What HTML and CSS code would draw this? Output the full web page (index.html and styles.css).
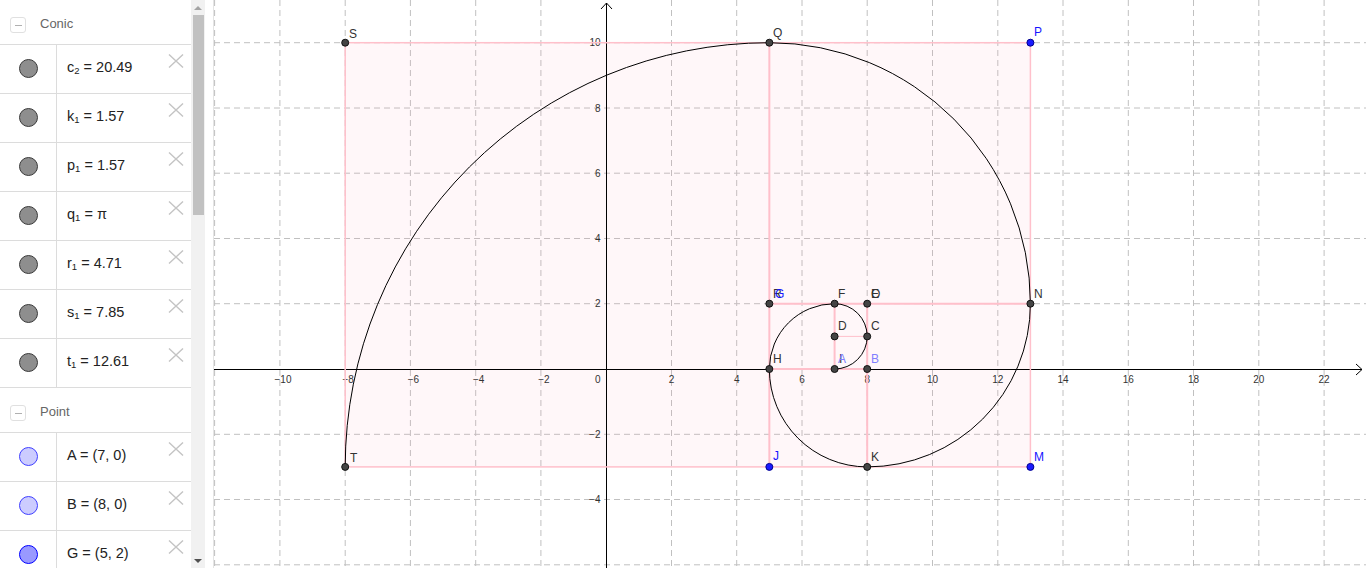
FILE: index.html
```html
<!DOCTYPE html>
<html>
<head>
<meta charset="utf-8">
<link rel="stylesheet" href="styles.css">
</head>
<body>
<div class="algebra">
  <div class="list">
    <div class="header"><span class="toggle"><span class="minus"></span></span><span class="htitle">Conic</span></div>
    <div class="row"><div class="icon-cell"><span class="dot gray"></span></div><div class="expr"><span>c<sub>2</sub> = 20.49</span></div><svg class="close" viewBox="0 0 16 14"><path d="M1 0.5L15 13.5M15 0.5L1 13.5"/></svg></div>
    <div class="row"><div class="icon-cell"><span class="dot gray"></span></div><div class="expr"><span>k<sub>1</sub> = 1.57</span></div><svg class="close" viewBox="0 0 16 14"><path d="M1 0.5L15 13.5M15 0.5L1 13.5"/></svg></div>
    <div class="row"><div class="icon-cell"><span class="dot gray"></span></div><div class="expr"><span>p<sub>1</sub> = 1.57</span></div><svg class="close" viewBox="0 0 16 14"><path d="M1 0.5L15 13.5M15 0.5L1 13.5"/></svg></div>
    <div class="row"><div class="icon-cell"><span class="dot gray"></span></div><div class="expr"><span>q<sub>1</sub> = π</span></div><svg class="close" viewBox="0 0 16 14"><path d="M1 0.5L15 13.5M15 0.5L1 13.5"/></svg></div>
    <div class="row"><div class="icon-cell"><span class="dot gray"></span></div><div class="expr"><span>r<sub>1</sub> = 4.71</span></div><svg class="close" viewBox="0 0 16 14"><path d="M1 0.5L15 13.5M15 0.5L1 13.5"/></svg></div>
    <div class="row"><div class="icon-cell"><span class="dot gray"></span></div><div class="expr"><span>s<sub>1</sub> = 7.85</span></div><svg class="close" viewBox="0 0 16 14"><path d="M1 0.5L15 13.5M15 0.5L1 13.5"/></svg></div>
    <div class="row"><div class="icon-cell"><span class="dot gray"></span></div><div class="expr"><span>t<sub>1</sub> = 12.61</span></div><svg class="close" viewBox="0 0 16 14"><path d="M1 0.5L15 13.5M15 0.5L1 13.5"/></svg></div>
    <div class="header"><span class="toggle"><span class="minus"></span></span><span class="htitle">Point</span></div>
    <div class="row"><div class="icon-cell"><span class="dot light"></span></div><div class="expr"><span>A = (7, 0)</span></div><svg class="close" viewBox="0 0 16 14"><path d="M1 0.5L15 13.5M15 0.5L1 13.5"/></svg></div>
    <div class="row"><div class="icon-cell"><span class="dot light"></span></div><div class="expr"><span>B = (8, 0)</span></div><svg class="close" viewBox="0 0 16 14"><path d="M1 0.5L15 13.5M15 0.5L1 13.5"/></svg></div>
    <div class="row"><div class="icon-cell"><span class="dot mid"></span></div><div class="expr"><span>G = (5, 2)</span></div><svg class="close" viewBox="0 0 16 14"><path d="M1 0.5L15 13.5M15 0.5L1 13.5"/></svg></div>
  </div>
  <div class="scrollbar">
    <div class="sb-btn"><span class="tri-up"></span></div>
    <div class="thumb"></div>
    <div class="sb-fill"></div>
    <div class="sb-btn"><span class="tri-down"></span></div>
  </div>
</div>
<div class="splitter"></div>
<div class="graph">
<svg width="1152" height="568" viewBox="0 0 1152 568">
<g transform="translate(-214,0)">
  <g class="grid">
    <path d="M214.6 0V568M279.9 0V568M345.2 0V568M410.4 0V568M475.7 0V568M540.9 0V568M671.5 0V568M736.7 0V568M802 0V568M867.2 0V568M932.5 0V568M997.8 0V568M1063 0V568M1128.3 0V568M1193.5 0V568M1258.8 0V568M1324.1 0V568"/>
    <path d="M214 42.7H1366M214 108H1366M214 173.2H1366M214 238.5H1366M214 303.7H1366M214 434.3H1366M214 499.5H1366M214 564.8H1366"/>
  </g>
  <rect class="fill" x="345.2" y="42.7" width="685.2" height="424.2"/>
  <g class="axes">
    <path d="M214 369.5H1362M606.5 568V3"/>
    <path d="M1356 364L1362 369.5L1356 375M601 9L606.5 3L612 9"/>
  </g>
  <g class="axlab">
    <text x="283" y="383">−10</text>
    <text x="348.2" y="383">−8</text>
    <text x="413.4" y="383">−6</text>
    <text x="478.7" y="383">−4</text>
    <text x="543.9" y="383">−2</text>
    <text x="671.5" y="383">2</text>
    <text x="736.7" y="383">4</text>
    <text x="802" y="383">6</text>
    <text x="867.2" y="383">8</text>
    <text x="932.5" y="383">10</text>
    <text x="997.8" y="383">12</text>
    <text x="1063" y="383">14</text>
    <text x="1128.3" y="383">16</text>
    <text x="1193.5" y="383">18</text>
    <text x="1258.8" y="383">20</text>
    <text x="1324.1" y="383">22</text>
  </g>
  <g class="aylab">
    <text x="600.5" y="383">0</text>
    <text x="600.5" y="46.2">10</text>
    <text x="600.5" y="111.5">8</text>
    <text x="600.5" y="176.7">6</text>
    <text x="600.5" y="242">4</text>
    <text x="600.5" y="307.2">2</text>
    <text x="600.5" y="437.8">−2</text>
    <text x="600.5" y="503">−4</text>
  </g>
  <g class="pink">
    <rect x="345.2" y="42.7" width="685.2" height="424.2" class="outer"/>
    <path d="M769.35 42.7V466.9M769.35 303.7H1030.4M867.2 303.7V466.9M769.35 369H867.2M834.6 303.7V369"/>
    <path class="thin" d="M834.6 336.4H867.2"/>
  </g>
  <path class="spiral" d="M834.6 369A32.63 32.63 0 0 0 867.2 336.4A32.63 32.63 0 0 0 834.6 303.7A65.26 65.26 0 0 0 769.35 369A97.9 97.9 0 0 0 867.2 466.9A163.15 163.15 0 0 0 1030.4 303.7A261 261 0 0 0 769.35 42.7A424.2 424.2 0 0 0 345.2 466.9"/>
  <g class="pt">
    <circle cx="345.2" cy="42.7" r="3.5"/>
    <circle cx="769.35" cy="42.7" r="3.5"/>
    <circle cx="1030.4" cy="303.7" r="3.5"/>
    <circle cx="867.2" cy="466.9" r="3.5"/>
    <circle cx="345.2" cy="466.9" r="3.5"/>
    <circle cx="769.35" cy="369" r="3.5"/>
    <circle cx="769.35" cy="303.7" r="3.5"/>
    <circle cx="834.6" cy="303.7" r="3.5"/>
    <circle cx="867.2" cy="303.7" r="3.5"/>
    <circle cx="834.6" cy="336.4" r="3.5"/>
    <circle cx="867.2" cy="336.4" r="3.5"/>
    <circle cx="834.6" cy="369" r="3.5"/>
    <circle cx="867.2" cy="369" r="3.5"/>
  </g>
  <g class="pt blue">
    <circle cx="1030.4" cy="42.7" r="3.5"/>
    <circle cx="1030.4" cy="466.9" r="3.5"/>
    <circle cx="769.35" cy="466.9" r="3.5"/>
  </g>
  <g class="lab">
    <text x="349" y="38">S</text>
    <text x="773" y="37">Q</text>
    <text x="1034" y="298">N</text>
    <text x="871" y="461">K</text>
    <text x="350" y="462">T</text>
    <text x="773" y="363">H</text>
    <text x="773" y="298">R</text>
    <text x="838" y="298">F</text>
    <text x="871" y="298">E</text>
    <text x="871" y="298">O</text>
    <text x="838" y="330">D</text>
    <text x="871" y="330">C</text>
    <text x="839" y="363">I</text>
  </g>
  <g class="lab blue">
    <text x="1034" y="36">P</text>
    <text x="1034" y="461">M</text>
    <text x="773" y="460">J</text>
    <text x="775" y="298">G</text>
  </g>
  <g class="lab light">
    <text x="838" y="363">A</text>
    <text x="871" y="363">B</text>
  </g>
</g>
</svg>
</div>
</body>
</html>
```
FILE: styles.css
```css
html, body {
  margin: 0;
  padding: 0;
}
body {
  width: 1366px;
  height: 568px;
  overflow: hidden;
  display: flex;
  background: #fff;
  font-family: "Liberation Sans", Arial, sans-serif;
}
.algebra {
  flex: none;
  width: 205px;
  height: 568px;
  display: flex;
}
.list {
  width: 191px;
  height: 568px;
  overflow: hidden;
  flex: none;
}
.header {
  height: 44px;
  border-bottom: 1px solid #dcdcdc;
  display: flex;
  align-items: flex-start;
  padding-left: 10px;
}
.toggle {
  margin-top: 17px;
  width: 14px;
  height: 14px;
  border: 1px solid #e0e0e0;
  border-radius: 3px;
  display: flex;
  align-items: center;
  justify-content: center;
  flex: none;
}
.minus {
  width: 7px;
  height: 1px;
  background: #b0b0b0;
}
.htitle {
  margin-left: 14px;
  margin-top: 16px;
  font-size: 13px;
  line-height: 16px;
  color: #666;
}
.row {
  height: 48px;
  border-bottom: 1px solid #dcdcdc;
  display: flex;
}
.icon-cell {
  width: 56px;
  flex: none;
  border-right: 1px solid #dcdcdc;
  display: flex;
  align-items: center;
  justify-content: center;
}
.dot {
  width: 17px;
  height: 17px;
  border-radius: 50%;
  margin-top: -2px;
}
.dot.gray {
  background: #8e8e8e;
  border: 1px solid #3a3a3a;
}
.dot.light {
  background: #ccccff;
  border: 1px solid #4040ff;
}
.dot.mid {
  background: #9999ff;
  border: 1px solid #0000ff;
}
.expr {
  flex: 1;
  padding-left: 10px;
  padding-bottom: 4px;
  display: flex;
  align-items: center;
  font-size: 14.5px;
  line-height: 18px;
  color: #222;
  white-space: nowrap;
}
.expr sub {
  font-size: 9.5px;
  vertical-align: -2px;
  line-height: 0;
}
.close {
  flex: none;
  width: 16px;
  height: 14px;
  margin-top: 9px;
  margin-right: 7px;
  fill: none;
  stroke: #c4c4c4;
  stroke-width: 1.4;
}
.scrollbar {
  width: 14px;
  height: 568px;
  flex: none;
  background: #f1f1f1;
  display: flex;
  flex-direction: column;
  align-items: center;
}
.sb-btn {
  height: 15px;
  width: 14px;
  display: flex;
  align-items: center;
  justify-content: center;
  flex: none;
}
.tri-up {
  width: 0;
  height: 0;
  border-left: 4px solid transparent;
  border-right: 4px solid transparent;
  border-bottom: 4px solid #a3a3a3;
}
.tri-down {
  width: 0;
  height: 0;
  border-left: 4px solid transparent;
  border-right: 4px solid transparent;
  border-top: 4px solid #505050;
}
.thumb {
  width: 11px;
  height: 200px;
  background: #c1c1c1;
  flex: none;
}
.sb-fill {
  flex: 1;
}
.splitter {
  width: 8px;
  height: 568px;
  flex: none;
  background: #fff;
  border-right: 1px solid #e4e4e4;
}
.graph {
  flex: none;
  width: 1152px;
  height: 568px;
  overflow: hidden;
}
.graph svg {
  display: block;
}
.grid path {
  fill: none;
  stroke: #c0c0c0;
  stroke-width: 1;
  stroke-dasharray: 6 4;
}
.fill {
  fill: rgba(255, 170, 185, 0.09);
}
.axes path {
  fill: none;
  stroke: #000;
  stroke-width: 1;
}
.axlab text, .aylab text {
  font-family: "Liberation Sans", Arial, sans-serif;
  font-size: 10px;
  fill: #333;
}
.axlab text {
  text-anchor: middle;
}
.aylab text {
  text-anchor: end;
}
.pink rect, .pink path {
  fill: none;
  stroke: #ffc0cb;
  stroke-width: 2;
}
.pink .outer {
  stroke-width: 1.5;
}
.pink .thin {
  stroke-width: 1;
}
.spiral {
  fill: none;
  stroke: #000;
  stroke-width: 1;
}
.pt circle {
  fill: #444;
  stroke: #111;
  stroke-width: 1;
}
.pt.blue circle {
  fill: #1a1aff;
  stroke: #00008c;
}
.lab text {
  font-family: "Liberation Sans", Arial, sans-serif;
  font-size: 12px;
  fill: #333;
}
.lab.blue text {
  fill: #1515ff;
}
.lab.light text {
  fill: #8080ff;
}
```
